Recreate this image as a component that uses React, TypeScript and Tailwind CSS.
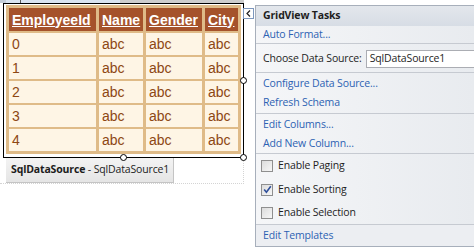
const heads = ["EmployeeId", "Name", "Gender", "City"];
const ids = [0, 1, 2, 3, 4];

function Handle({ pos }: { pos: string }) {
  return <div className={`absolute w-[7px] h-[7px] rounded-full border border-black bg-white ${pos}`} />;
}

function Check({ checked }: { checked?: boolean }) {
  return (
    <div className="w-[12px] h-[12px] border border-[#8f8f8f] bg-gradient-to-br from-[#dcdcdc] to-[#f7f7f7] flex items-center justify-center">
      {checked && (
        <svg width="9" height="9" viewBox="0 0 9 9">
          <path d="M1.2 4.6 L3.4 7.2 L7.8 1.2" fill="none" stroke="#2f4f9a" strokeWidth="1.6" />
        </svg>
      )}
    </div>
  );
}

function Sep() {
  return <div className="h-px bg-[#c6cad1] shrink-0" />;
}

function Link({ children }: { children: string }) {
  return <span className="text-[#2d62b3]">{children}</span>;
}

export default function App() {
  return (
    <div className="relative w-[474px] h-[248px] overflow-hidden bg-white flex">
      {/* designer surface */}
      <div className="relative w-[244px] shrink-0">
        <div className="h-[3px] flex">
          <div className="w-[6px] bg-[#c2ccd8]" />
          <div className="w-[14px] bg-[#d8e3f0]" />
          <div className="w-px bg-[#5a5a5a]" />
          <div className="w-[99px] bg-[#d8e3f0]" />
          <div className="flex-1 bg-[#cdcdcd]" />
        </div>
        <div className="ml-[3px] w-[241px] border border-black pt-px pb-[3px] pl-[2px] pr-[2px]">
          <div className="bg-[#dfbb88] pt-[3px] pb-[3px] pl-[3px] pr-[2px] font-['Liberation_Sans',Arial,sans-serif] text-[14px]">
            <div className="grid grid-cols-[87px_44px_56px_33px] gap-x-[3px] gap-y-[2px]">
              {heads.map((h) => (
                <div key={h} className="h-[23px] bg-[#a5522b] text-white font-bold underline pl-[3px] flex items-center leading-none">
                  {h}
                </div>
              ))}
              {ids.map((i) =>
                [String(i), "abc", "abc", "abc"].map((t, j) => (
                  <div key={`${i}-${j}`} className="h-[22px] bg-[#fef5e5] text-[#8d4713] pl-[3px] flex items-center leading-none">
                    {t}
                  </div>
                ))
              )}
            </div>
          </div>
        </div>
        <div className="h-[26px] border-b border-r border-dotted border-[#d4d4d4] font-['Open_Sans',sans-serif] text-[10.5px] tracking-[-0.15px]">
          <div className="ml-[6px] w-[168px] h-[25px] bg-gradient-to-b from-[#f3f3f3] to-[#e5e5e5] border-r border-b border-[#c4c4c4] pl-[5px] flex items-center text-[#1c1c1c] whitespace-nowrap">
            <span className="font-bold">SqlDataSource</span>
            <span>&nbsp;- SqlDataSource1</span>
          </div>
        </div>
        <Handle pos="left-[120px] top-[154px]" />
        <Handle pos="left-[240px] top-[154px]" />
        <Handle pos="left-[240px] top-[77px]" />
      </div>

      {/* smart tag glyph */}
      <div className="relative w-[11px] shrink-0">
        <div className="absolute left-[-1px] top-[8px] w-[11px] h-[11px] bg-white border border-[#7d97bd] flex items-center justify-center">
          <svg width="5" height="7" viewBox="0 0 5 7">
            <path d="M4 0.5 L1 3.5 L4 6.5" fill="none" stroke="#222" strokeWidth="1.2" />
          </svg>
        </div>
      </div>

      {/* tasks panel */}
      <div className="mt-[5px] h-[242px] flex-1 flex flex-col border-l border-t border-b border-[#a7afbb] bg-gradient-to-r from-[#f5f6f8] to-[#e8ebef] font-['Open_Sans',sans-serif] text-[10.5px] tracking-[-0.15px] text-[#1e1e1e] whitespace-nowrap">
        <div className="h-[20px] shrink-0 bg-gradient-to-b from-[#e3e7ec] to-[#d7dde5] pl-[7px] flex items-center font-bold">
          GridView Tasks
        </div>
        <div className="h-[17px] shrink-0 pl-[7px] flex items-center">
          <Link>Auto Format...</Link>
        </div>
        <Sep />
        <div className="h-[28px] shrink-0 pl-[7px] pt-[2px] flex items-center">
          <span>Choose Data Source:</span>
          <div className="ml-[4px] flex-1 h-[18px] bg-white border border-[#abadb3] border-r-0 pl-[3px] flex items-center">
            SqlDataSource1
          </div>
        </div>
        <Sep />
        <div className="shrink-0 pt-px pb-px pl-[7px] flex flex-col">
          <div className="h-[19px] flex items-center"><Link>Configure Data Source...</Link></div>
          <div className="h-[19px] flex items-center"><Link>Refresh Schema</Link></div>
        </div>
        <Sep />
        <div className="shrink-0 pt-px pl-[7px] flex flex-col">
          <div className="h-[19px] flex items-center"><Link>Edit Columns...</Link></div>
          <div className="h-[19px] flex items-center"><Link>Add New Column...</Link></div>
        </div>
        <Sep />
        <div className="shrink-0 pl-[5px] flex flex-col">
          <div className="h-[24px] flex items-center gap-[5px]"><Check /><span>Enable Paging</span></div>
          <div className="h-[23px] flex items-center gap-[5px]"><Check checked /><span>Enable Sorting</span></div>
          <div className="h-[23px] flex items-center gap-[5px]"><Check /><span>Enable Selection</span></div>
        </div>
        <Sep />
        <div className="flex-1 pl-[7px] flex items-center bg-[#eceef2]">
          <Link>Edit Templates</Link>
        </div>
      </div>
    </div>
  );
}
